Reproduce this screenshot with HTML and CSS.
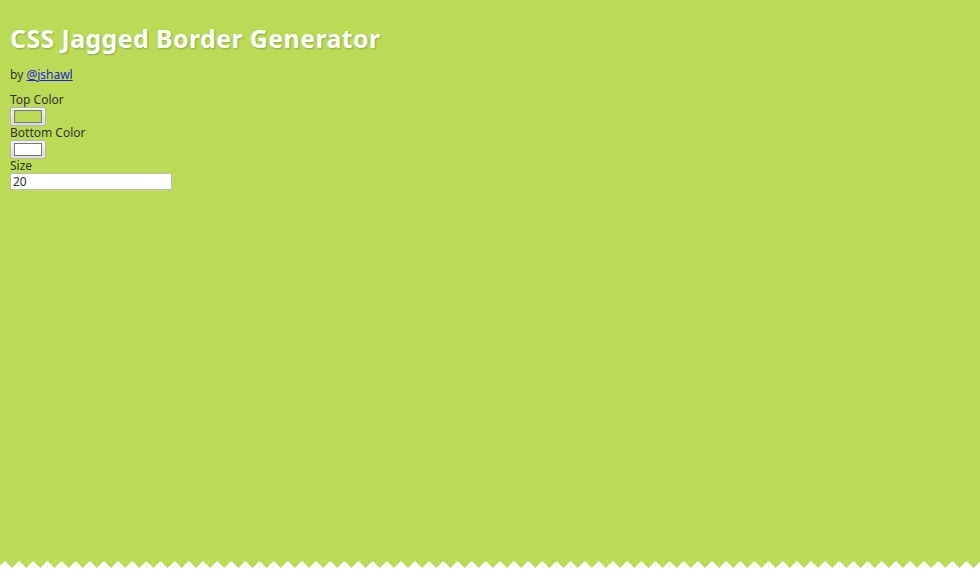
FILE: index.html
```html
<!DOCTYPE html>
<html lang="en">
  <head>
    <meta charset="UTF-8" />
    <meta name="viewport" content="width=device-width, initial-scale=1.0" />
    <title>CSS Jagged Border Generator</title>
    <link rel="stylesheet" href="styles.css">
  </head>

  <body>
    <div class="top">
      <h1>CSS Jagged Border Generator</h1>
      <p class="byline">by <a href="#">@jshawl</a></p>

      <div class="controls">
        <label for="topColor">Top Color</label>
        <input type="color" id="topColor" value="#bbdb57" />
        <label for="bottomColor">Bottom Color</label>
        <input type="color" id="bottomColor" value="#ffffff" />
        <label for="size">Size</label>
        <input type="text" id="size" value="20" />
      </div>
    </div>

    <div class="jagged"></div>
  </body>
</html>
```

FILE: styles.css
```css
html,
body {
  margin: 0;
  height: 100%;
}

body {
  background: #ffffff;
  font-family: "Noto Sans", sans-serif;
  font-size: 12px;
  color: #333;
  overflow: hidden;
}

.top {
  background: #bbdb57;
  height: 561px;
  box-sizing: border-box;
  padding: 1px 10px;
}

h1 {
  margin: 20px 0 11px;
  font-size: 25px;
  line-height: 34px;
  letter-spacing: 0.35px;
  color: #fff;
  text-shadow: 1px 1px 2px rgba(0, 0, 0, 0.25);
}

.byline {
  margin: 0 0 10px;
  line-height: 17px;
}

.byline a {
  color: #2222dd;
}

.controls {
  display: flex;
  flex-direction: column;
  align-items: flex-start;
}

.controls label {
  line-height: 14px;
}

input[type="color"] {
  width: 36px;
  height: 19px;
  padding: 2px 3px;
  margin: 0;
  border: 1px solid #b5b5b5;
  border-radius: 2px;
  background: linear-gradient(#f4f4f4, #dcdcdc);
  box-sizing: border-box;
}

input[type="color"]::-webkit-color-swatch-wrapper {
  padding: 0;
}

input[type="color"]::-webkit-color-swatch {
  border: 1px solid #777;
  border-radius: 0;
}

input[type="text"] {
  width: 162px;
  height: 17px;
  margin: 0;
  padding: 0 2px;
  border: 1px solid #bbb;
  box-sizing: border-box;
  font: 12px "Noto Sans", sans-serif;
  color: #333;
}

/* teeth: two 45deg corners per tile make an upward zigzag */
.jagged {
  height: 7px;
  background:
    linear-gradient(45deg, #fff 25%, transparent 25%),
    linear-gradient(-45deg, #fff 25%, transparent 25%),
    #bbdb57;
  background-size: 14.142px 14.142px;
  background-position: 5px bottom;
  background-repeat: repeat-x;
}
```
